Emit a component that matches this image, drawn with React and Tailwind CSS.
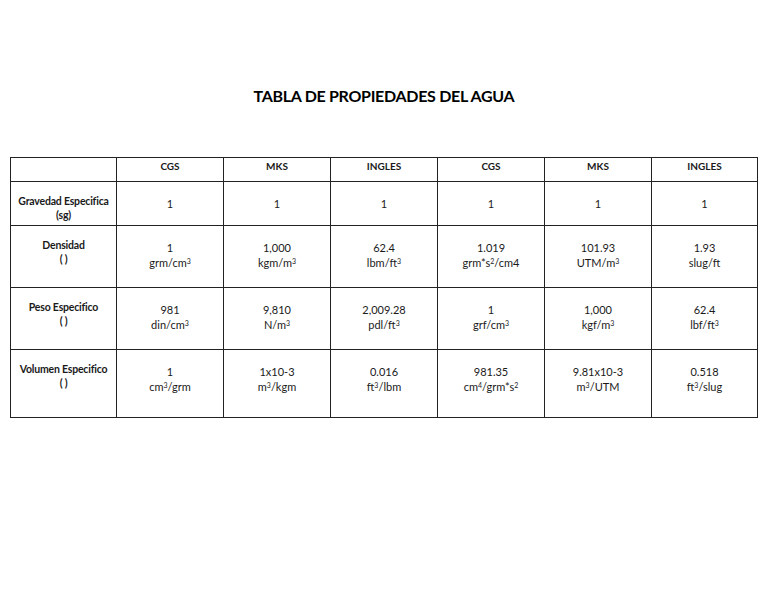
import React from "react";

const S = ({ children }) => <sup className="text-[7px] top-[-0.45em]">{children}</sup>;

const head = ["", "CGS", "MKS", "INGLES", "CGS", "MKS", "INGLES"];

const rows = [
  {
    h: "h-[44px]",
    label: ["Gravedad Especifica", "(sg)"],
    cells: [["1"], ["1"], ["1"], ["1"], ["1"], ["1"]],
  },
  {
    h: "h-[62px]",
    label: ["Densidad", "( )"],
    cells: [
      ["1", <>grm/cm<S>3</S></>],
      ["1,000", <>kgm/m<S>3</S></>],
      ["62.4", <>lbm/ft<S>3</S></>],
      ["1.019", <>grm*s<S>2</S>/cm4</>],
      ["101.93", <>UTM/m<S>3</S></>],
      ["1.93", "slug/ft"],
    ],
  },
  {
    h: "h-[62px]",
    label: ["Peso Especifico", "( )"],
    cells: [
      ["981", <>din/cm<S>3</S></>],
      ["9,810", <>N/m<S>3</S></>],
      ["2,009.28", <>pdl/ft<S>3</S></>],
      ["1", <>grf/cm<S>3</S></>],
      ["1,000", <>kgf/m<S>3</S></>],
      ["62.4", <>lbf/ft<S>3</S></>],
    ],
  },
  {
    h: "h-[68px]",
    label: ["Volumen Especifico", "( )"],
    cells: [
      ["1", <>cm<S>3</S>/grm</>],
      ["1x10-3", <>m<S>3</S>/kgm</>],
      ["0.016", <>ft<S>3</S>/lbm</>],
      ["981.35", <>cm<S>4</S>/grm*s<S>2</S></>],
      ["9.81x10-3", <>m<S>3</S>/UTM</>],
      ["0.518", <>ft<S>3</S>/slug</>],
    ],
  },
];

export default function App() {
  return (
    <div className="w-[768px] h-[594px] bg-white font-['Lato','Open_Sans',sans-serif] text-[#1a1a1a]">
      <h1 className="pt-[85px] text-center text-[16px] font-bold tracking-[-0.3px] leading-[21px] text-black">
        TABLA DE PROPIEDADES DEL AGUA
      </h1>
      <table className="ml-[10px] mt-[51px] border-collapse table-fixed w-[747px]">
        <colgroup>
          <col className="w-[106px]" />
          <col className="w-[107px]" />
          <col className="w-[107px]" />
          <col className="w-[107px]" />
          <col className="w-[107px]" />
          <col className="w-[107px]" />
          <col className="w-[106px]" />
        </colgroup>
        <thead>
          <tr className="h-[24px]">
            {head.map((t, i) => (
              <th
                key={i}
                className="border border-[#222] align-top pt-[1px] text-[10px] font-bold leading-[14px] text-center"
              >
                {t}
              </th>
            ))}
          </tr>
        </thead>
        <tbody>
          {rows.map((r, i) => (
            <tr key={i} className={r.h}>
              <td className="border border-[#222] align-top pt-[12px] text-center text-[10.5px] font-bold leading-[14px] tracking-[-0.2px]">
                <div>{r.label[0]}</div>
                <div>{r.label[1]}</div>
              </td>
              {r.cells.map((c, j) => (
                <td
                  key={j}
                  className="border border-[#222] align-top pt-[14px] text-center text-[11px] leading-[15px]"
                >
                  {c.map((line, k) => (
                    <div key={k}>{line}</div>
                  ))}
                </td>
              ))}
            </tr>
          ))}
        </tbody>
      </table>
    </div>
  );
}
